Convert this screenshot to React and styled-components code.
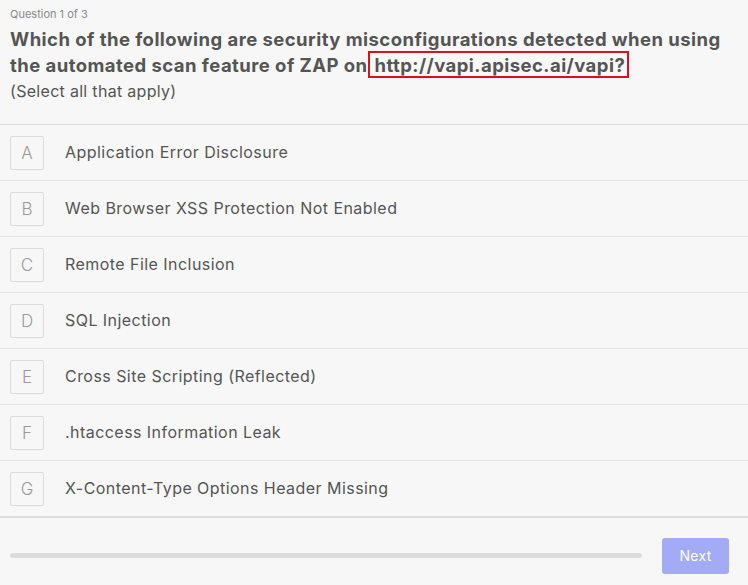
import React from 'react'
import styled, { createGlobalStyle } from 'styled-components'

const GlobalStyle = createGlobalStyle`
  html, body {
    margin: 0;
    padding: 0;
    background: #f7f7f7;
  }
  body {
    font-family: Inter, "Open Sans", sans-serif;
    color: #555;
  }
`

const Page = styled.div`
  width: 748px;
  height: 585px;
  display: flex;
  flex-direction: column;
  background: #f7f7f7;
`

const Header = styled.div`
  padding: 6px 10px 0;
  height: 118px;
`

const Counter = styled.div`
  font-size: 11px;
  line-height: 16px;
  color: #8a8a8a;
`

const Title = styled.h1`
  margin: 4px 0 0;
  font-size: 18.5px;
  line-height: 26px;
  font-weight: 700;
  color: #555;
  letter-spacing: 0.45px;
`

const Highlight = styled.span`
  border: 2px solid #d9101f;
  padding: 1px 2px 0 0;
`

const Hint = styled.div`
  font-size: 16px;
  line-height: 24px;
  color: #555;
  margin-top: 1px;
  letter-spacing: 0.3px;
`

const Options = styled.div`
  border-top: 1px solid #dedede;
`

const Option = styled.div`
  height: 55px;
  display: flex;
  align-items: center;
  gap: 21px;
  padding: 0 10px;
  border-bottom: ${p => (p.$last ? '2px solid #dcdcdc' : '1px solid #e2e2e2')};
`

const Letter = styled.div`
  width: 32px;
  height: 32px;
  border: 1px solid #dcdcdc;
  border-radius: 2px;
  background: #f7f7f7;
  display: flex;
  align-items: center;
  justify-content: center;
  font-size: 17px;
  color: #9a9a9a;
  font-weight: 300;
`

const Label = styled.div`
  font-size: 16px;
  color: #555;
  letter-spacing: 0.45px;
  margin-top: -1px;
`

const Footer = styled.div`
  flex: 1;
  display: flex;
  align-items: center;
  gap: 20px;
  padding: 8px 19px 0 10px;
`

const Progress = styled.div`
  flex: 1;
  height: 5px;
  border-radius: 3px;
  background: #dcdcdc;
`

const NextButton = styled.button`
  width: 67px;
  height: 36px;
  border: none;
  border-radius: 3px;
  background: #a4abf6;
  color: #fff;
  font-family: inherit;
  font-size: 14px;
  letter-spacing: 0.3px;
  cursor: default;
`

const options = [
  'Application Error Disclosure',
  'Web Browser XSS Protection Not Enabled',
  'Remote File Inclusion',
  'SQL Injection',
  'Cross Site Scripting (Reflected)',
  '.htaccess Information Leak',
  'X-Content-Type Options Header Missing'
]

export default function App() {
  return (
    <Page>
      <GlobalStyle />
      <Header>
        <Counter>Question 1 of 3</Counter>
        <Title>
          Which of the following are security misconfigurations detected when using the automated scan feature of ZAP on
          <Highlight> http://vapi.apisec.ai/vapi?</Highlight>
        </Title>
        <Hint>(Select all that apply)</Hint>
      </Header>
      <Options>
        {options.map((text, i) => (
          <Option key={text} $last={i === options.length - 1}>
            <Letter>{String.fromCharCode(65 + i)}</Letter>
            <Label>{text}</Label>
          </Option>
        ))}
      </Options>
      <Footer>
        <Progress />
        <NextButton>Next</NextButton>
      </Footer>
    </Page>
  )
}
